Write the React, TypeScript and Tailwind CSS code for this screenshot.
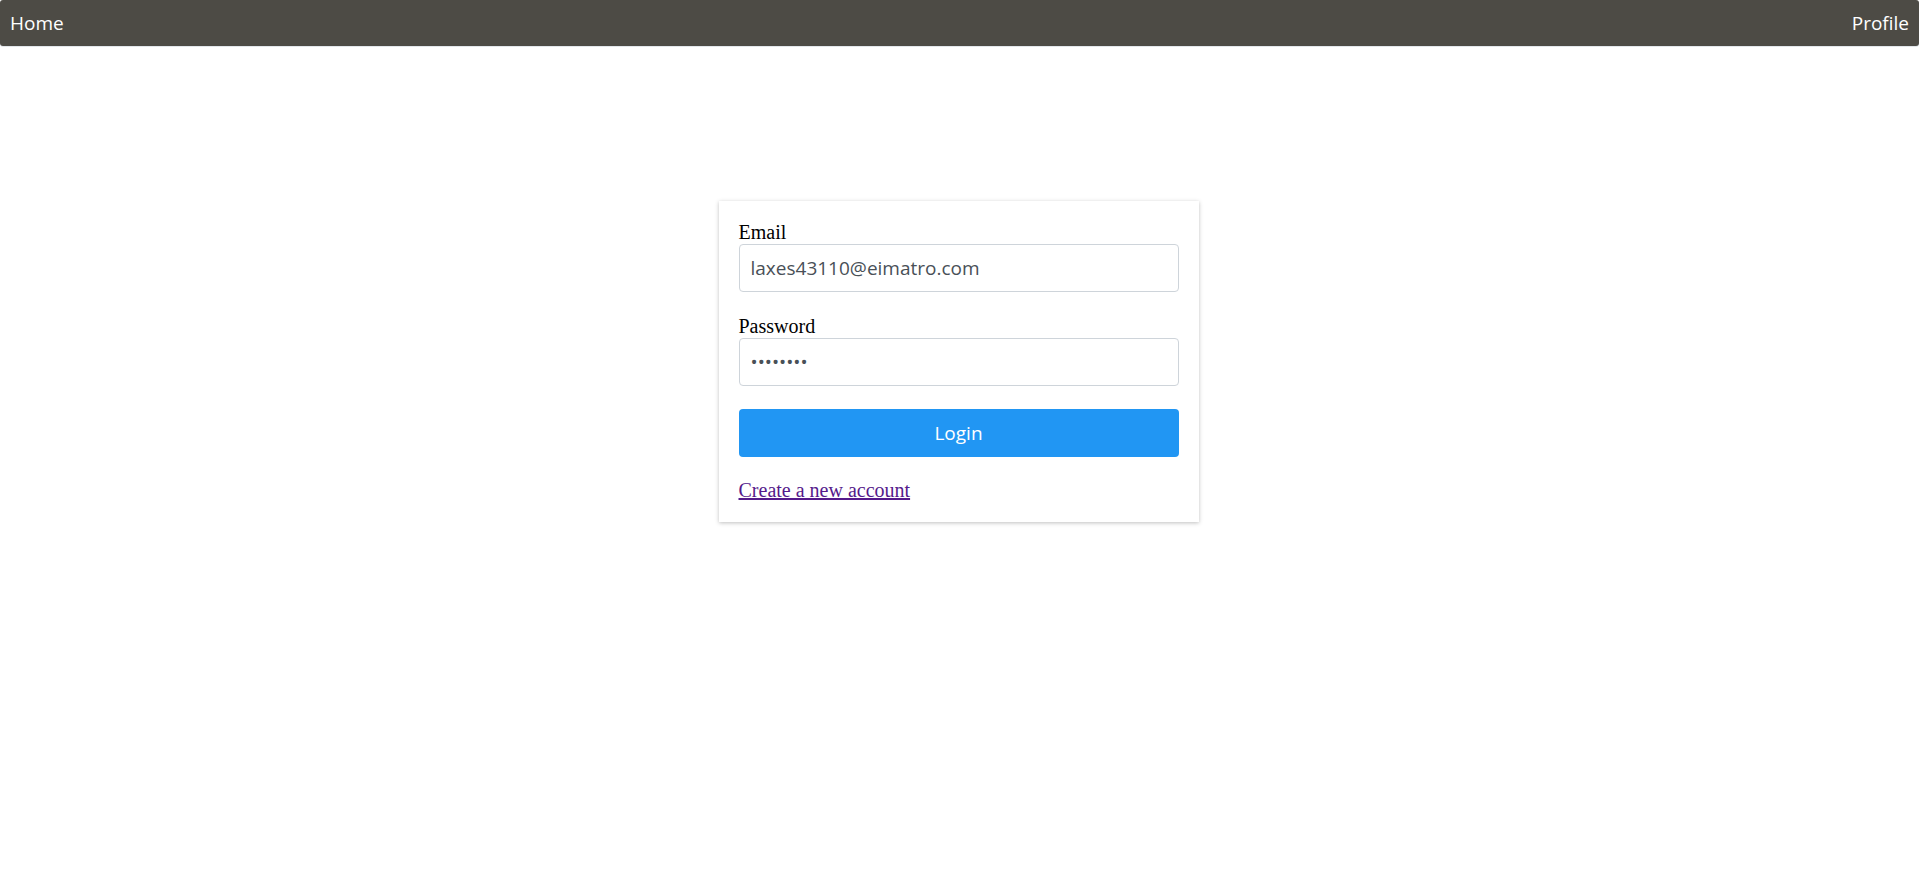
import { useState } from "react";

const sans = "font-['Open_Sans',sans-serif]";
const serif = "font-['Liberation_Serif',serif]";

const Navbar = () => {
  return (
    <nav className={`flex h-[46px] items-center justify-between rounded-[3px] bg-[#4d4b45] px-[10px] text-[19px] text-white shadow-[0_1px_0_#e3e7eb] ${sans}`}>
      <a href="#">Home</a>
      <a href="#">Profile</a>
    </nav>
  );
};

const LoginForm = () => {
  const [email, setEmail] = useState("laxes43110@eimatro.com");
  const [password, setPassword] = useState("password");

  return (
    <div className="flex justify-center pr-[2px]">
      <div className="mt-[155px] w-[480px] bg-white p-5 shadow-[0_1px_4px_rgba(0,0,0,0.25)]">
        <label htmlFor="email" className={`block text-[20px] leading-[23px] text-black ${serif}`}>
          Email
        </label>
        <input id="email" type="email" value={email} onChange={(e) => setEmail(e.target.value)}
          className={`block h-12 w-full rounded border border-[#ced4da] px-[11px] text-[19px] text-[#495057] outline-none ${sans}`} />

        <label htmlFor="password" className={`mt-[23px] block text-[20px] leading-[23px] text-black ${serif}`}>
          Password
        </label>
        <input id="password" type="password" value={password} onChange={(e) => setPassword(e.target.value)}
          className={`block h-12 w-full rounded border border-[#ced4da] px-[11px] text-[19px] text-[#495057] outline-none ${sans}`} />

        <button className={`mt-[23px] block h-12 w-full rounded bg-[#2196f3] text-[19px] text-white ${sans}`}>
          Login
        </button>

        <a href="#" className={`mt-[22px] block w-fit text-[20px] leading-[23px] text-[#551a8b] underline ${serif}`}>
          Create a new account
        </a>
      </div>
    </div>
  );
};

export default function App() {
  return (
    <div className="min-h-screen bg-white">
      <Navbar />
      <LoginForm />
    </div>
  );
}
